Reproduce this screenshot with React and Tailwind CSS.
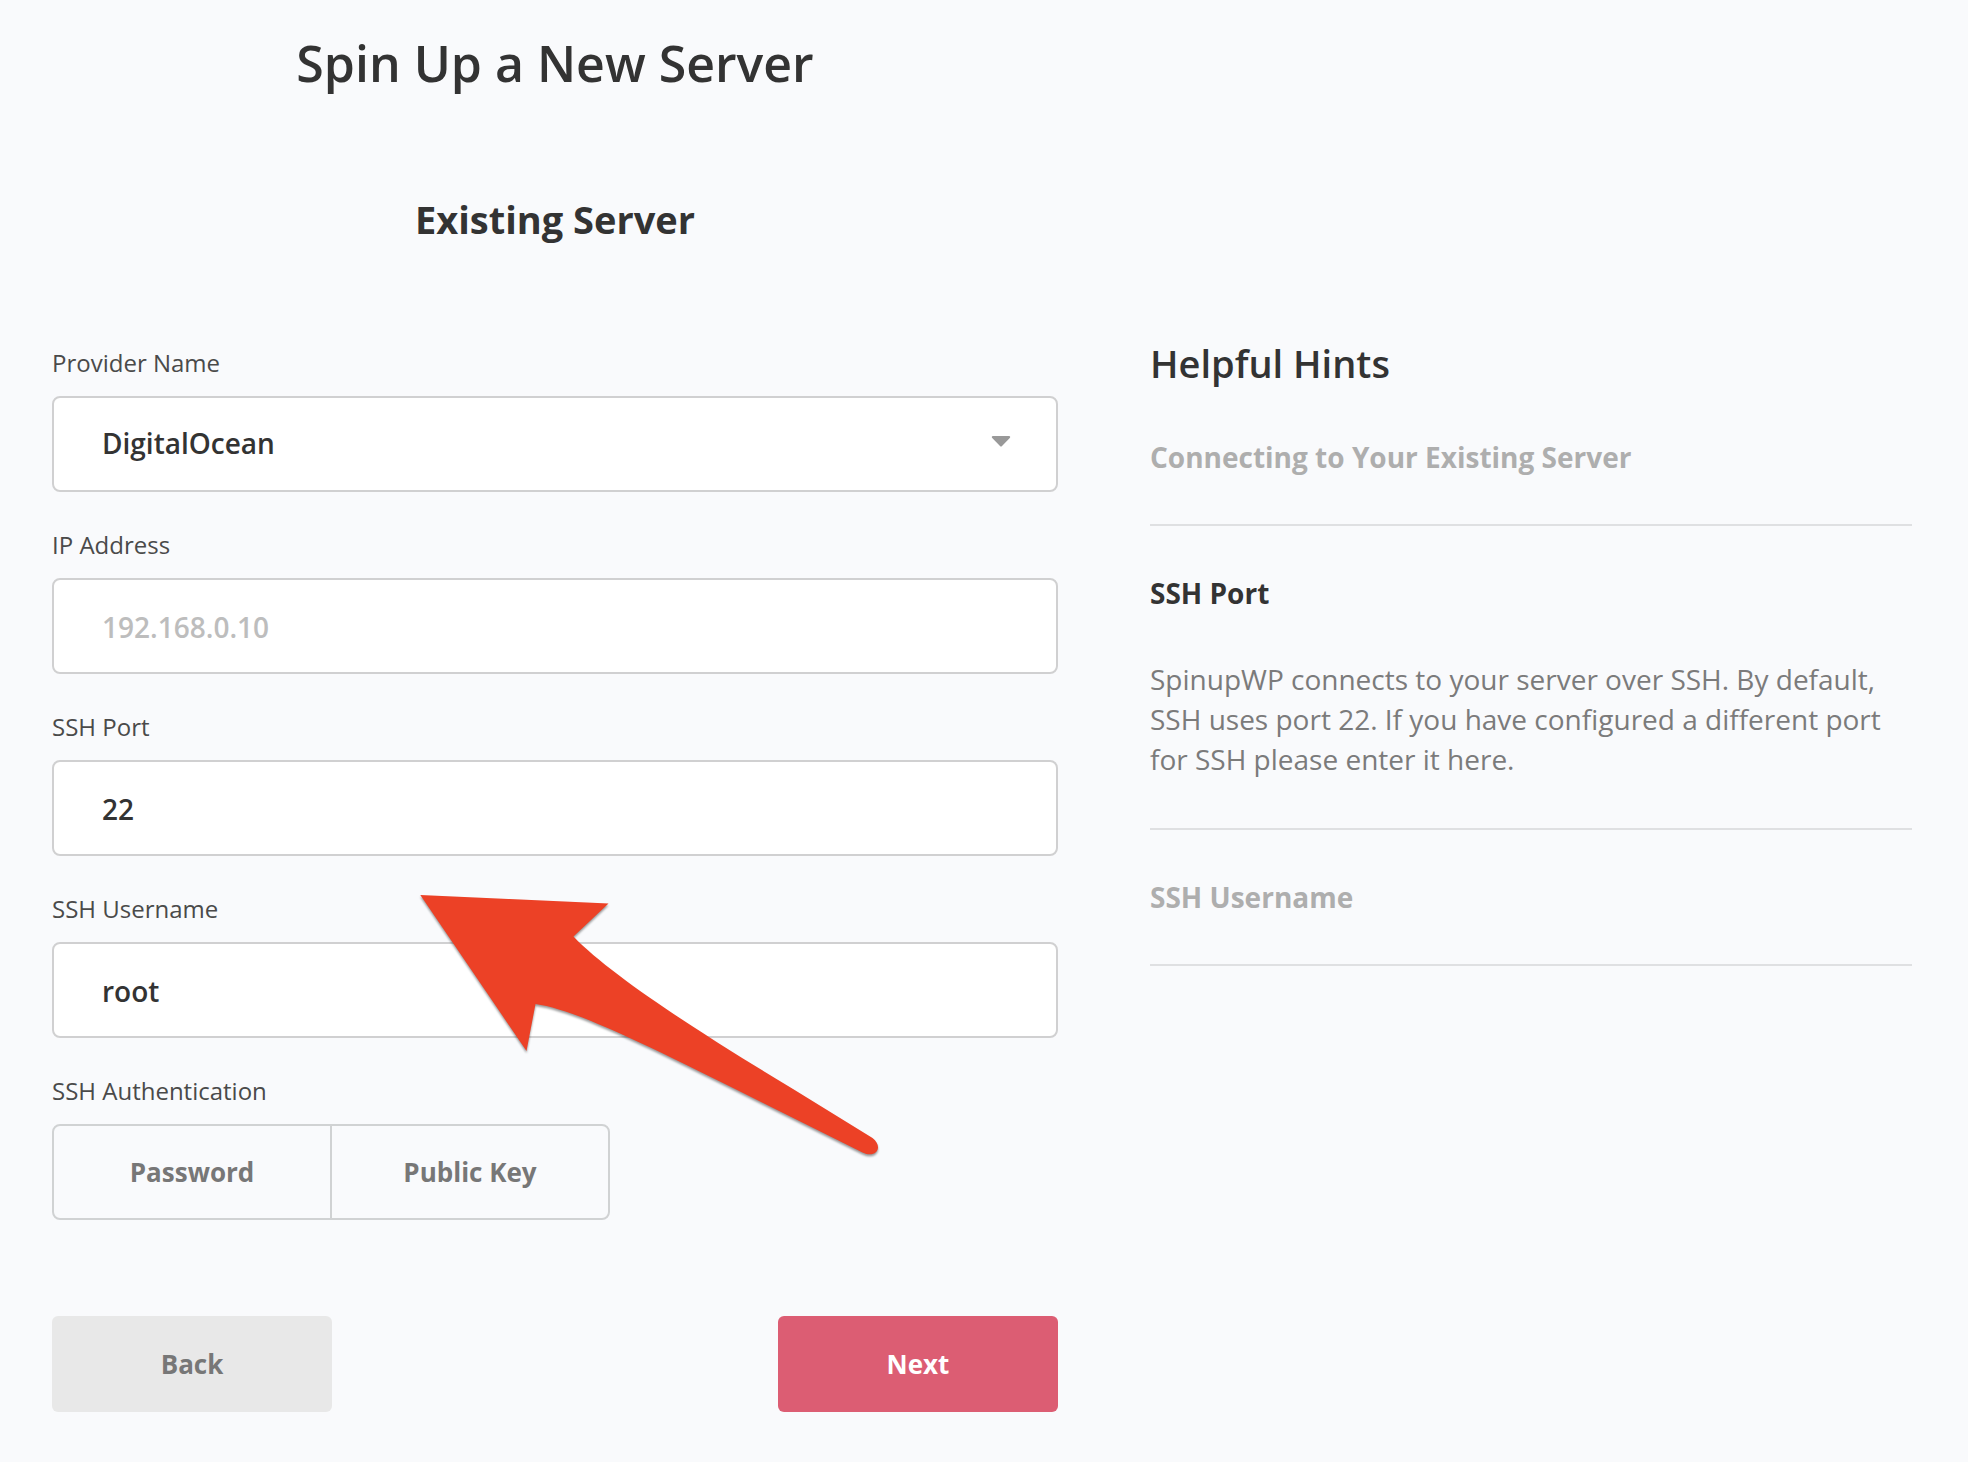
import React from "react";

const FIELD_BOX =
  "block h-24 w-full appearance-none rounded-lg border-2 border-[#d0d0d1] bg-white px-12 text-[28px] font-semibold text-[#333333] outline-none placeholder:text-[#bdbdbd] placeholder:opacity-100";

const LABEL = "mb-[18px] block text-2xl leading-[30px] text-[#4a4a4a]";

function TextField({ id, label, children, ...props }) {
  return (
    <div className="relative">
      <label htmlFor={id} className={LABEL}>
        {label}
      </label>
      <input id={id} type="text" className={FIELD_BOX + " pt-0.5"} {...props} />
      {children}
    </div>
  );
}

function ProviderSelect() {
  return (
    <div>
      <label htmlFor="provider" className={LABEL}>
        Provider Name
      </label>
      <div className="relative">
        <select id="provider" defaultValue="DigitalOcean" className={FIELD_BOX + " pb-0.5"}>
          <option>DigitalOcean</option>
        </select>
        <svg
          viewBox="0 0 20 12"
          className="pointer-events-none absolute top-10 right-[47px] h-3 w-5"
          aria-hidden="true"
        >
          <path
            d="M2 0H18C19.3 0 19.6 1.2 18.8 2L11 10C10.4 10.7 9.6 10.7 9 10L1.2 2C0.4 1.2 0.7 0 2 0Z"
            fill="#999999"
          />
        </svg>
      </div>
    </div>
  );
}

function Arrow() {
  return (
    <svg
      viewBox="0 0 464 264"
      className="pointer-events-none absolute top-0 left-[368px] h-[264px] w-[464px] overflow-visible drop-shadow-[0_2px_1px_rgba(0,0,0,0.4)]"
      aria-hidden="true"
    >
      <path
        d="M0.3 1L188.5 9.5L153.5 42.5C192 83 290 145 373 195L452.5 244C464 253 456 265 442.5 258.5L313 194C205 140 150 115 115.5 110L106.5 157Z"
        fill="#ec4126"
      />
    </svg>
  );
}

function Hint({ title, children }) {
  return (
    <section className="border-b-2 border-[#dfe0e2] py-[47px]">
      <h4
        className={
          children
            ? "text-[28px] leading-10 font-bold text-[#333333]"
            : "text-[28px] leading-10 font-bold text-[#aeaeae]"
        }
      >
        {title}
      </h4>
      {children && (
        <p className="mt-[46px] mb-0.5 text-[28px] leading-10 text-[#7b7b7b]">{children}</p>
      )}
    </section>
  );
}

export default function App() {
  return (
    <main className="grid min-h-screen grid-cols-[1006fr_762fr] gap-x-[92px] bg-[#f9fafc] pt-8 pr-14 pb-[50px] pl-[52px] font-['Open_Sans',sans-serif] text-[#333333]">
      <form onSubmit={(e) => e.preventDefault()}>
        <h1 className="text-center text-[50px] leading-[62px] font-semibold">
          Spin Up a New Server
        </h1>
        <h2 className="mt-[101px] text-center text-[38px] leading-12 font-bold">
          Existing Server
        </h2>

        <div className="mt-[105px] flex flex-col gap-[38px]">
          <ProviderSelect />
          <TextField id="ip" label="IP Address" placeholder="192.168.0.10" />
          <TextField id="port" label="SSH Port" defaultValue="22" />
          <TextField id="username" label="SSH Username" defaultValue="root">
            <Arrow />
          </TextField>
          <div role="group" aria-labelledby="auth-label">
            <span id="auth-label" className={LABEL}>
              SSH Authentication
            </span>
            <div className="flex text-[26px] font-bold text-[#777777]">
              <button
                type="button"
                className="h-24 w-[280px] rounded-l-lg border-2 border-[#d0d2d3]"
              >
                Password
              </button>
              <button
                type="button"
                className="-ml-0.5 h-24 w-[280px] rounded-r-lg border-2 border-[#d0d2d3]"
              >
                Public Key
              </button>
            </div>
          </div>
        </div>

        <div className="mt-24 flex justify-between text-[26px] font-bold">
          <button type="button" className="h-24 w-[280px] rounded-md bg-[#e8e8e8] text-[#777777]">
            Back
          </button>
          <button type="submit" className="h-24 w-[280px] rounded-md bg-[#dc5d73] text-white">
            Next
          </button>
        </div>
      </form>

      <aside className="mt-[307px]">
        <h3 className="mb-[3px] text-[38px] leading-12 font-semibold">Helpful Hints</h3>
        <Hint title="Connecting to Your Existing Server" />
        <Hint title="SSH Port">
          SpinupWP connects to your server over SSH. By default, SSH uses port 22. If you
          have configured a different port for SSH please enter it here.
        </Hint>
        <Hint title="SSH Username" />
      </aside>
    </main>
  );
}
